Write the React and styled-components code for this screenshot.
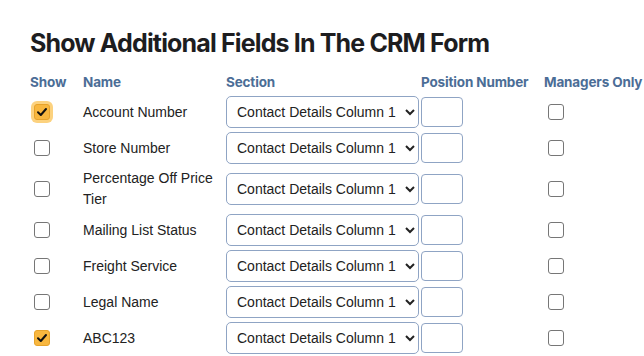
import React from "react";
import styled, { createGlobalStyle } from "styled-components";

const GlobalStyle = createGlobalStyle`
  body {
    margin: 0;
    background: #fff;
    font-family: "Liberation Sans", Arial, sans-serif;
    color: #222;
  }
`;

const Page = styled.div`
  padding: 28px 0 0 30px;
`;

const Title = styled.h2`
  margin: 0 0 15px;
  font-family: Inter, "Noto Sans", sans-serif;
  font-size: 25px;
  line-height: 30px;
  font-weight: 700;
  color: #1d1d1f;
  letter-spacing: -0.85px;
`;

const Grid = styled.div`
  display: grid;
  grid-template-columns: 53px 143px 195px 123px 1fr;
  row-gap: 4px;
  align-items: center;
`;

const Head = styled.div`
  font-family: Inter, "Noto Sans", sans-serif;
  font-size: 13.5px;
  line-height: 19px;
  font-weight: 700;
  color: #4b6d96;
  letter-spacing: -0.15px;
  white-space: nowrap;
`;

const Cell = styled.div`
  display: flex;
  align-items: center;
  min-height: 32px;
`;

const NameCell = styled.div`
  font-size: 14px;
  line-height: 21px;
  color: #222;
  padding-right: 8px;
`;

const Box = styled.span`
  box-sizing: border-box;
  display: inline-flex;
  align-items: center;
  justify-content: center;
  margin-left: 4px;
  width: 16px;
  height: 16px;
  border-radius: 3px;
  border: 1px solid ${(p) => (p.checked ? "#e7a32b" : "#767676")};
  background: ${(p) => (p.checked ? "#f8b73f" : "#fff")};
  box-shadow: ${(p) => (p.focused ? "0 0 0 3px #fcd27f" : "none")};
`;

const Select = styled.select`
  box-sizing: border-box;
  width: 193px;
  height: 32px;
  padding: 0 6px 0 6px;
  border: 1px solid #8fa4c4;
  border-radius: 5px;
  background: #fff;
  font-family: "Liberation Sans", Arial, sans-serif;
  font-size: 14px;
  color: #222;
`;

const NumberInput = styled.input`
  box-sizing: border-box;
  width: 42px;
  height: 30px;
  border: 1px solid #8fa4c4;
  border-radius: 4px;
  background: #fff;
`;

function Check({ checked, focused }) {
  return (
    <Box checked={checked} focused={focused}>
      {checked ? (
        <svg width="12" height="12" viewBox="0 0 12 12">
          <path d="M2 6.3 L4.8 9 L10 3" fill="none" stroke="#111" strokeWidth="2" strokeLinecap="round" strokeLinejoin="round" />
        </svg>
      ) : null}
    </Box>
  );
}

const fields = [
  { name: "Account Number", show: true, focused: true },
  { name: "Store Number" },
  { name: "Percentage Off Price Tier" },
  { name: "Mailing List Status" },
  { name: "Freight Service" },
  { name: "Legal Name" },
  { name: "ABC123", show: true },
];

export default function App() {
  return (
    <Page>
      <GlobalStyle />
      <Title>Show Additional Fields In The CRM Form</Title>
      <Grid>
        <Head>Show</Head>
        <Head>Name</Head>
        <Head>Section</Head>
        <Head>Position Number</Head>
        <Head>Managers Only</Head>
        {fields.map((f, i) => (
          <React.Fragment key={i}>
            <Cell>
              <Check checked={f.show} focused={f.focused} />
            </Cell>
            <NameCell>{f.name}</NameCell>
            <Cell>
              <Select defaultValue="c1">
                <option value="c1">Contact Details Column 1</option>
                <option value="c2">Contact Details Column 2</option>
              </Select>
            </Cell>
            <Cell>
              <NumberInput type="text" />
            </Cell>
            <Cell>
              <Check />
            </Cell>
          </React.Fragment>
        ))}
      </Grid>
    </Page>
  );
}
